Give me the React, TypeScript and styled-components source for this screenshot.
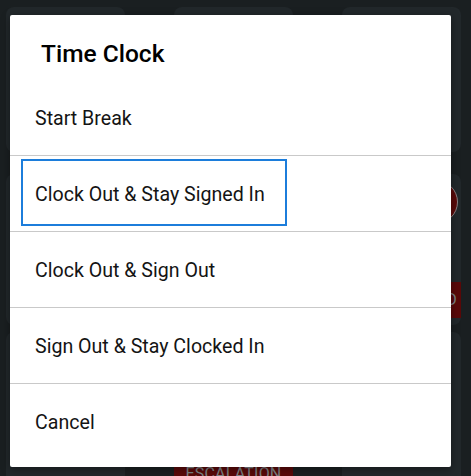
import React from 'react'
import styled, { createGlobalStyle } from 'styled-components'

const GlobalStyle = createGlobalStyle`
  html, body {
    margin: 0;
    padding: 0;
    background: #1a1f21;
    font-family: Roboto, 'Noto Sans', 'Liberation Sans', sans-serif;
    overflow: hidden;
  }
`

const Screen = styled.div`
  position: relative;
  width: 471px;
  height: 476px;
  overflow: hidden;
  background: #1a1f21;
`

const TileGrid = styled.div`
  display: flex;
  flex-direction: column;
  padding: 7px 0 0 6px;
`

const TileRow = styled.div<{ $top: number; $height: number }>`
  display: grid;
  grid-template-columns: repeat(3, 119px);
  column-gap: 49px;
  margin-top: ${(p) => p.$top}px;
  height: ${(p) => p.$height}px;
`

const Tile = styled.div<{ $pad: number }>`
  position: relative;
  display: flex;
  flex-direction: column;
  justify-content: flex-end;
  padding-bottom: ${(p) => p.$pad}px;
  background: #22282b;
  border-radius: 8px;
`

const TileLabel = styled.div<{ $alert?: boolean; $align?: string }>`
  height: 36px;
  line-height: 36px;
  padding: 0 4px;
  text-align: ${(p) => p.$align || 'center'};
  font-size: 16px;
  letter-spacing: 0.2px;
  text-transform: uppercase;
  color: #7d8386;
  background: ${(p) => (p.$alert ? '#5a0909' : 'transparent')};
  white-space: nowrap;
  overflow: hidden;
`

const Badge = styled.div`
  position: absolute;
  top: 6px;
  right: 3px;
  width: 42px;
  height: 42px;
  border-radius: 50%;
  background: #5a0909;
  border: 1px solid #8c8284;
`

// dialog
const Dialog = styled.div`
  position: absolute;
  left: 10px;
  top: 15px;
  width: 441px;
  height: 452px;
  background: #ffffff;
  border-radius: 2px;
  box-shadow: 0 2px 10px rgba(0, 0, 0, 0.4);
  display: flex;
  flex-direction: column;
`

const Title = styled.h2`
  margin: 0;
  height: 65px;
  box-sizing: border-box;
  padding: 24px 0 0 31px;
  font-size: 24.5px;
  line-height: 30px;
  font-weight: 500;
  color: #000000;
`

const List = styled.ul`
  list-style: none;
  margin: 0;
  padding: 0;
`

const Item = styled.li`
  height: 75px;
  box-sizing: border-box;
  padding: 3px 0 5px 11px;
  display: flex;
  & + & {
    border-top: 1px solid #c9c9c9;
    height: 76px;
  }
`

const Option = styled.button<{ $focused?: boolean }>`
  display: flex;
  align-items: center;
  height: 67px;
  box-sizing: border-box;
  padding: 3px 20px 0 12px;
  background: transparent;
  border: 2px solid ${(p) => (p.$focused ? '#1c7ddb' : 'transparent')};
  font-family: inherit;
  font-size: 19.6px;
  color: #141414;
  cursor: pointer;
  outline: none;
`

const options = [
  'Start Break',
  'Clock Out & Stay Signed In',
  'Clock Out & Sign Out',
  'Sign Out & Stay Clocked In',
  'Cancel',
]

const App: React.FC = () => {
  const focusedIndex = 1

  return (
    <>
      <GlobalStyle />
      <Screen>
        <TileGrid>
          <TileRow $top={0} $height={145}>
            <Tile $pad={7} />
            <Tile $pad={7} />
            <Tile $pad={7} />
          </TileRow>
          <TileRow $top={22} $height={151}>
            <Tile $pad={7}>
              <TileLabel $align="left">Emergency</TileLabel>
            </Tile>
            <Tile $pad={7} />
            <Tile $pad={7}>
              <Badge />
              <TileLabel $alert $align="right">
                Time Card
              </TileLabel>
            </Tile>
          </TileRow>
          <TileRow $top={7} $height={160}>
            <Tile $pad={20}>
              <TileLabel>Lone Worker</TileLabel>
            </Tile>
            <Tile $pad={0}>
              <TileLabel $alert>Escalation</TileLabel>
            </Tile>
            <Tile $pad={20}>
              <TileLabel>Visitor Log</TileLabel>
            </Tile>
          </TileRow>
        </TileGrid>

        <Dialog role="dialog" aria-label="Time Clock">
          <Title>Time Clock</Title>
          <List>
            {options.map((label, i) => (
              <Item key={label}>
                <Option $focused={i === focusedIndex}>{label}</Option>
              </Item>
            ))}
          </List>
        </Dialog>
      </Screen>
    </>
  )
}

export default App
